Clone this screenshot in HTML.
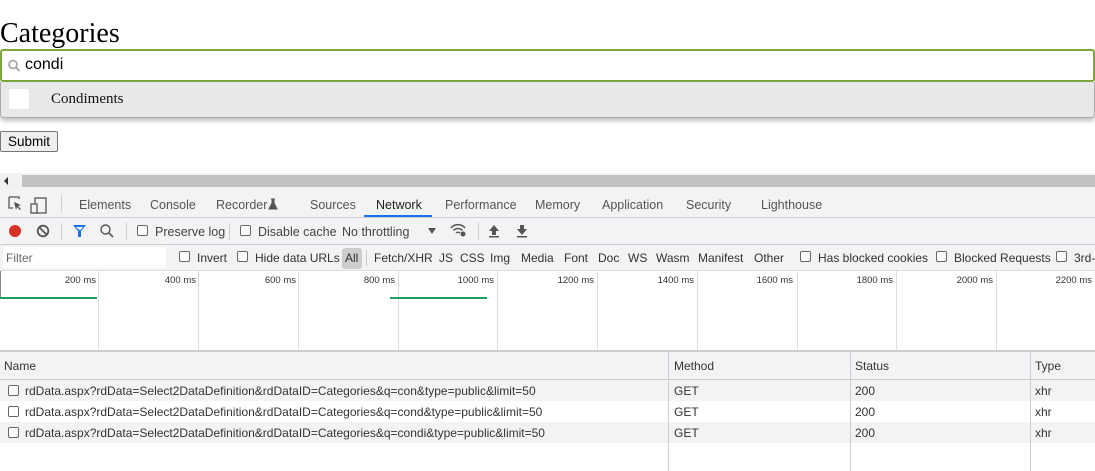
<!DOCTYPE html>
<html><head><meta charset="utf-8"><style>
*{margin:0;padding:0;box-sizing:border-box}
body{width:1095px;height:471px;overflow:hidden;background:#fff;position:relative;font-family:"Liberation Sans",sans-serif}
.a{position:absolute;white-space:nowrap}
.dt{font-family:"Liberation Sans",sans-serif;font-size:12px;color:#333}
.tab{top:198px;color:#555;font-size:12.5px}
.cb{display:inline-block;width:11px;height:11px;border:1px solid #666;border-radius:2px;background:#fff;position:absolute}
.vl{position:absolute;width:1px;background:#ddd}
.ms{position:absolute;top:275px;font-size:9.5px;color:#333;font-family:"Liberation Sans",sans-serif;text-align:right;width:60px}
</style></head><body>
<div class="a" style="left:0;top:18px;font-family:'Liberation Serif',serif;font-size:28px;color:#000">Categories</div>
<div class="a" style="left:0;top:49px;width:1095px;height:33px;border:2px solid #7ca73d;border-radius:3px;background:#fff"></div>
<svg class="a" style="left:6px;top:58px" width="16" height="16"><circle cx="7" cy="6.5" r="4" fill="none" stroke="#aaa" stroke-width="1.8"/><line x1="10" y1="9.5" x2="13.5" y2="13" stroke="#aaa" stroke-width="2"/></svg>
<div class="a" style="left:25px;top:56px;font-size:16px;color:#000">condi</div>
<div class="a" style="left:0;top:82px;width:1095px;height:36px;background:#e8e8e8;border:1px solid #aaa;border-top:none;border-radius:0 0 4px 4px;box-shadow:0 3px 5px rgba(0,0,0,.25)"></div>
<div class="a" style="left:9px;top:89px;width:20px;height:20px;background:#fff;border-radius:2px"></div>
<div class="a" style="left:51px;top:91px;font-family:'Liberation Serif',serif;font-size:15px;color:#111">Condiments</div>
<div class="a" style="left:0;top:131px;width:58px;height:21px;border:1px solid #767676;border-radius:2px;background:#efefef;font-size:13.5px;color:#000;text-align:center;line-height:19px">Submit</div>
<div class="a" style="left:0;top:173px;width:1095px;height:16px;background:#f1f1f1"></div>
<div class="a" style="left:4px;top:177px;width:0;height:0;border-top:4px solid transparent;border-bottom:4px solid transparent;border-right:4px solid #333"></div>
<div class="a" style="left:22px;top:175px;width:1073px;height:12px;background:#c1c1c1"></div>
<div class="a" style="left:0;top:189px;width:1095px;height:81px;background:#f1f3f4"></div>
<div class="a" style="left:0;top:217px;width:1095px;height:1px;background:#cbcdd1"></div>
<div class="a" style="left:0;top:244px;width:1095px;height:1px;background:#cbcdd1"></div>
<svg class="a" style="left:8px;top:196px" width="40" height="20"><path d="M1 1h10v2M1 1v11h4" fill="none" stroke="#555" stroke-width="1.3"/><path d="M6 6l7 3-3 1 3 3-1 1-3-3-1 3z" fill="#555"/><rect x="27" y="2" width="11" height="15" fill="none" stroke="#555" stroke-width="1.3"/><rect x="23" y="8" width="6" height="9" fill="#f1f3f4" stroke="#555" stroke-width="1.3"/></svg>
<div class="a" style="left:61px;top:195px;width:1px;height:17px;background:#ccc"></div>
<div class="a dt tab" style="left:79px">Elements</div>
<div class="a dt tab" style="left:150px">Console</div>
<div class="a dt tab" style="left:216px">Recorder</div>
<svg class="a" style="left:268px;top:198px" width="10" height="12"><path d="M3 1h4M4 1v4l-3 6h8l-3-6v-4" fill="#555" stroke="#555"/></svg>
<div class="a dt tab" style="left:310px">Sources</div>
<div class="a dt tab" style="left:376px;color:#222">Network</div>
<div class="a" style="left:364px;top:215px;width:68px;height:2px;background:#1a73e8"></div>
<div class="a dt tab" style="left:445px">Performance</div>
<div class="a dt tab" style="left:535px">Memory</div>
<div class="a dt tab" style="left:602px">Application</div>
<div class="a dt tab" style="left:686px">Security</div>
<div class="a dt tab" style="left:761px">Lighthouse</div>
<div class="a" style="left:9px;top:225px;width:12px;height:12px;border-radius:50%;background:#d93025"></div>
<svg class="a" style="left:36px;top:224px" width="14" height="14"><circle cx="7" cy="7" r="5.3" fill="none" stroke="#555" stroke-width="1.8"/><line x1="3.3" y1="3.3" x2="10.7" y2="10.7" stroke="#555" stroke-width="1.8"/></svg>
<div class="a" style="left:61px;top:223px;width:1px;height:17px;background:#ccc"></div>
<svg class="a" style="left:72px;top:224px" width="16" height="14"><path d="M1 1h13l-5 6v6h-3v-6z" fill="#1a73e8"/><path d="M4 3h7l-3 3.5z" fill="#fff"/></svg>
<svg class="a" style="left:99px;top:223px" width="16" height="16"><circle cx="6.5" cy="6.5" r="4.5" fill="none" stroke="#555" stroke-width="1.4"/><line x1="10" y1="10" x2="14" y2="14" stroke="#555" stroke-width="1.6"/></svg>
<div class="a" style="left:126px;top:223px;width:1px;height:17px;background:#ccc"></div>
<span class="cb" style="left:137px;top:225px"></span><div class="a dt" style="left:155px;top:225px;color:#444;font-size:12.5px">Preserve log</div>
<div class="a" style="left:229px;top:223px;width:1px;height:17px;background:#ccc"></div>
<span class="cb" style="left:240px;top:225px"></span><div class="a dt" style="left:258px;top:225px;color:#444;font-size:12.5px">Disable cache</div>
<div class="a dt" style="left:342px;top:225px;color:#444;font-size:12.5px">No throttling</div>
<div class="a" style="left:428px;top:228px;border-left:4px solid transparent;border-right:4px solid transparent;border-top:6px solid #555"></div>
<svg class="a" style="left:450px;top:222px" width="18" height="16"><path d="M1 6a9 9 0 0 1 14 0M3.5 8.5a6 6 0 0 1 9 0M6 11a3 3 0 0 1 4 0" fill="none" stroke="#555" stroke-width="1.5"/><circle cx="13" cy="12" r="2.5" fill="#555"/></svg>
<div class="a" style="left:478px;top:223px;width:1px;height:17px;background:#ccc"></div>
<svg class="a" style="left:488px;top:224px" width="12" height="14"><path d="M6 1l5 6h-3v4h-4v-4h-3z" fill="#555"/><rect x="1" y="12" width="10" height="1.5" fill="#555"/></svg>
<svg class="a" style="left:516px;top:224px" width="12" height="14"><path d="M6 11l5-6h-3v-4h-4v4h-3z" fill="#555"/><rect x="1" y="12" width="10" height="1.5" fill="#555"/></svg>
<div class="a" style="left:3px;top:247px;width:163px;height:21px;background:#fff"></div>
<div class="a dt" style="left:6px;top:251px;color:#666">Filter</div>
<span class="cb" style="left:179px;top:251px"></span><div class="a dt" style="left:197px;top:251px">Invert</div>
<span class="cb" style="left:237px;top:251px"></span><div class="a dt" style="left:255px;top:251px">Hide data URLs</div>
<div class="a" style="left:342px;top:248px;width:20px;height:21px;background:#cdcdcd;border-radius:3px"></div>
<div class="a dt" style="left:345px;top:251px">All</div>
<div class="a" style="left:366px;top:250px;width:1px;height:16px;background:#ccc"></div>
<div class="a dt" style="left:374px;top:251px">Fetch/XHR</div>
<div class="a dt" style="left:439px;top:251px">JS</div>
<div class="a dt" style="left:460px;top:251px">CSS</div>
<div class="a dt" style="left:490px;top:251px">Img</div>
<div class="a dt" style="left:521px;top:251px">Media</div>
<div class="a dt" style="left:564px;top:251px">Font</div>
<div class="a dt" style="left:598px;top:251px">Doc</div>
<div class="a dt" style="left:628px;top:251px">WS</div>
<div class="a dt" style="left:656px;top:251px">Wasm</div>
<div class="a dt" style="left:698px;top:251px">Manifest</div>
<div class="a dt" style="left:754px;top:251px">Other</div>
<span class="cb" style="left:800px;top:251px"></span><div class="a dt" style="left:818px;top:251px">Has blocked cookies</div>
<span class="cb" style="left:936px;top:251px"></span><div class="a dt" style="left:954px;top:251px">Blocked Requests</div>
<span class="cb" style="left:1056px;top:251px"></span><div class="a dt" style="left:1074px;top:251px">3rd-</div>
<div class="a" style="left:0;top:270px;width:1095px;height:1px;background:#ddd"></div>
<div class="a" style="left:0;top:271px;width:1px;height:26px;background:#888"></div>
<div class="vl" style="left:98px;top:270px;height:80px"></div>
<div class="vl" style="left:198px;top:270px;height:80px"></div>
<div class="vl" style="left:298px;top:270px;height:80px"></div>
<div class="vl" style="left:398px;top:270px;height:80px"></div>
<div class="vl" style="left:497px;top:270px;height:80px"></div>
<div class="vl" style="left:597px;top:270px;height:80px"></div>
<div class="vl" style="left:697px;top:270px;height:80px"></div>
<div class="vl" style="left:797px;top:270px;height:80px"></div>
<div class="vl" style="left:896px;top:270px;height:80px"></div>
<div class="vl" style="left:996px;top:270px;height:80px"></div>
<div class="ms" style="left:36px">200 ms</div>
<div class="ms" style="left:136px">400 ms</div>
<div class="ms" style="left:236px">600 ms</div>
<div class="ms" style="left:335px">800 ms</div>
<div class="ms" style="left:434px">1000 ms</div>
<div class="ms" style="left:534px">1200 ms</div>
<div class="ms" style="left:634px">1400 ms</div>
<div class="ms" style="left:733px">1600 ms</div>
<div class="ms" style="left:833px">1800 ms</div>
<div class="ms" style="left:933px">2000 ms</div>
<div class="ms" style="left:1032px">2200 ms</div>
<div class="a" style="left:0;top:297px;width:97px;height:2px;background:#1aa260"></div>
<div class="a" style="left:390px;top:297px;width:97px;height:2px;background:#1aa260"></div>
<div class="a" style="left:0;top:350px;width:1095px;height:2px;background:#cbcdd1"></div>
<div class="a" style="left:0;top:352px;width:1095px;height:28px;background:#f1f3f4;border-bottom:1px solid #cbcdd1"></div>
<div class="a dt" style="left:4px;top:359px">Name</div>
<div class="a dt" style="left:674px;top:359px">Method</div>
<div class="a dt" style="left:855px;top:359px">Status</div>
<div class="a dt" style="left:1035px;top:359px">Type</div>
<div class="a" style="left:0;top:380px;width:1095px;height:21px;background:#f3f3f3"></div>
<div class="a" style="left:0;top:422px;width:1095px;height:21px;background:#f3f3f3"></div>
<div class="vl" style="left:668px;top:352px;height:119px;background:#cbcdd1"></div>
<div class="vl" style="left:850px;top:352px;height:119px;background:#cbcdd1"></div>
<div class="vl" style="left:1030px;top:352px;height:119px;background:#cbcdd1"></div>
<span class="cb" style="left:8px;top:385px"></span><div class="a dt" style="left:25px;top:384px">rdData.aspx?rdData=Select2DataDefinition&amp;rdDataID=Categories&amp;q=con&amp;type=public&amp;limit=50</div>
<span class="cb" style="left:8px;top:406px"></span><div class="a dt" style="left:25px;top:405px">rdData.aspx?rdData=Select2DataDefinition&amp;rdDataID=Categories&amp;q=cond&amp;type=public&amp;limit=50</div>
<span class="cb" style="left:8px;top:427px"></span><div class="a dt" style="left:25px;top:426px">rdData.aspx?rdData=Select2DataDefinition&amp;rdDataID=Categories&amp;q=condi&amp;type=public&amp;limit=50</div>
<div class="a dt" style="left:674px;top:384px">GET</div><div class="a dt" style="left:855px;top:384px">200</div><div class="a dt" style="left:1035px;top:384px">xhr</div>
<div class="a dt" style="left:674px;top:405px">GET</div><div class="a dt" style="left:855px;top:405px">200</div><div class="a dt" style="left:1035px;top:405px">xhr</div>
<div class="a dt" style="left:674px;top:426px">GET</div><div class="a dt" style="left:855px;top:426px">200</div><div class="a dt" style="left:1035px;top:426px">xhr</div>
</body></html>
